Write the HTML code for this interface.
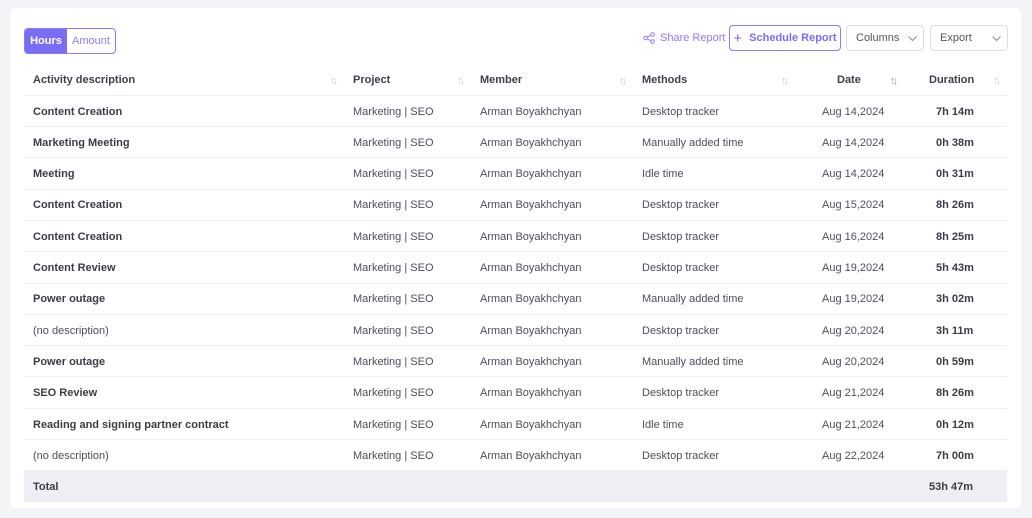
<!DOCTYPE html>
<html><head><style>
*{margin:0;padding:0;box-sizing:border-box}
body{width:1032px;height:518px;background:#f3f4f7;font-family:"Liberation Sans",sans-serif;font-size:11px;color:#4b4f5c;position:relative;overflow:hidden}
.card{position:absolute;left:10px;top:8px;width:1011px;height:500px;background:#fff;border-radius:5px}
.tog{position:absolute;left:24px;top:28px;height:26px;width:92px;border:1px solid #8b7cf6;border-radius:4px;display:flex;overflow:hidden}
.tog div{display:flex;align-items:center;justify-content:center;font-weight:bold;font-size:11px}
.tog .a{width:42px;background:#7b6cf6;color:#fff}
.tog .b{flex:1;color:#8b7cf6;font-weight:normal}
.btn{position:absolute;top:25px;height:26px;border-radius:4px;display:flex;align-items:center;font-size:11px}
.share{left:643px;color:#8b7cf6;border:none}
.sched{left:729px;width:112px;border:1px solid #8b7cf6;color:#7b6cf6;justify-content:center}
.dd{border:1px solid #dcdde2;color:#555;padding-left:9px}
.row{position:absolute;left:24px;width:983px;height:31px;border-bottom:1px solid #eef0f3}
.row span{position:absolute;top:9px;white-space:nowrap}
.h span{font-weight:bold;color:#3d404a}
.b1{font-weight:bold;color:#3a3d47}
.si{position:absolute;top:10px;color:#c8cad0;font-size:11px;letter-spacing:-3px;font-style:normal}
</style></head><body>
<div class="card"></div>
<div class="tog"><div class="a">Hours</div><div class="b">Amount</div></div>
<div class="btn share"><svg width="12" height="12" viewBox="0 0 12 12" style="margin-right:5px"><circle cx="2.5" cy="6" r="1.8" fill="none" stroke="#8b7cf6"/><circle cx="9.5" cy="2.5" r="1.8" fill="none" stroke="#8b7cf6"/><circle cx="9.5" cy="9.5" r="1.8" fill="none" stroke="#8b7cf6"/><path d="M4 5.2L8 3.3M4 6.8L8 8.7" stroke="#8b7cf6"/></svg>Share Report</div>
<div class="btn sched"><span style="font-size:15px;margin-right:7px;font-weight:normal">+</span><b style="font-weight:bold">Schedule Report</b></div>
<div class="btn dd" style="left:846px;width:78px">Columns<svg style="position:absolute;right:6px;top:10px" width="9" height="6"><path d="M0.5 0.5L4.5 4.5L8.5 0.5" fill="none" stroke="#888"/></svg></div>
<div class="btn dd" style="left:930px;width:78px">Export<svg style="position:absolute;right:6px;top:10px" width="9" height="6"><path d="M0.5 0.5L4.5 4.5L8.5 0.5" fill="none" stroke="#888"/></svg></div>

<div class="row h" style="top:65px">
<span style="left:9px">Activity description</span><i class="si" style="left:306px">↑↓</i>
<span style="left:329px">Project</span><i class="si" style="left:433px">↑↓</i>
<span style="left:456px">Member</span><i class="si" style="left:595px">↑↓</i>
<span style="left:618px">Methods</span><i class="si" style="left:757px">↑↓</i>
<span style="left:813px">Date</span><i class="si" style="left:866px;color:#999">↑↓</i>
<span style="left:905px">Duration</span><i class="si" style="left:969px">↑↓</i>
</div>
<div id="rows"></div>
<div class="row" style="top:471px;background:#eeeff4;border:none"><span class="b1" style="left:9px;top:10px">Total</span><span class="b1" style="left:905px;top:10px">53h 47m</span></div>
<script>
var d=[["Content Creation",1,"Desktop tracker","Aug 14,2024","7h 14m"],["Marketing Meeting",1,"Manually added time","Aug 14,2024","0h 38m"],["Meeting",1,"Idle time","Aug 14,2024","0h 31m"],["Content Creation",1,"Desktop tracker","Aug 15,2024","8h 26m"],["Content Creation",1,"Desktop tracker","Aug 16,2024","8h 25m"],["Content Review",1,"Desktop tracker","Aug 19,2024","5h 43m"],["Power outage",1,"Manually added time","Aug 19,2024","3h 02m"],["(no description)",0,"Desktop tracker","Aug 20,2024","3h 11m"],["Power outage",1,"Manually added time","Aug 20,2024","0h 59m"],["SEO Review",1,"Desktop tracker","Aug 21,2024","8h 26m"],["Reading and signing partner contract",1,"Idle time","Aug 21,2024","0h 12m"],["(no description)",0,"Desktop tracker","Aug 22,2024","7h 00m"]];
var h="";d.forEach(function(r,i){var t=96+i*31.3;h+='<div class="row" style="top:'+t+'px"><span '+(r[1]?'class="b1"':'')+' style="left:9px;top:9.5px">'+r[0]+'</span><span style="left:329px;top:9.5px">Marketing | SEO</span><span style="left:456px;top:9.5px">Arman Boyakhchyan</span><span style="left:618px;top:9.5px">'+r[2]+'</span><span style="left:798px;top:9.5px">'+r[3]+'</span><span class="b1" style="left:912px;top:9.5px">'+r[4]+'</span></div>'});
document.getElementById("rows").outerHTML=h;
</script>
</body></html>
